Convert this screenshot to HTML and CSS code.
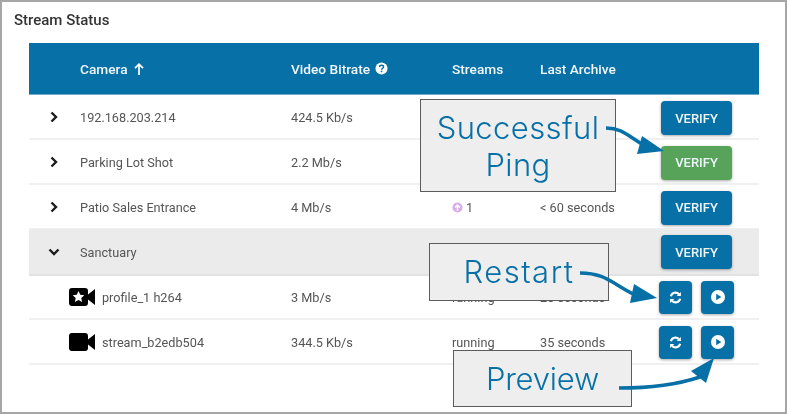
FILE: index.html
```html
<!DOCTYPE html>
<html lang="en">
<head>
<meta charset="utf-8">
<title>Stream Status</title>
<link rel="stylesheet" href="styles.css">
</head>
<body>
<main class="frame">
  <h1 class="title">Stream Status</h1>
  <section class="table">
    <div class="row head">
      <div class="c-exp"></div>
      <div class="c-name">Camera
        <svg class="sort" viewBox="0 0 10 12" width="10" height="12"><path d="M5 12V1.500M1 5.200L5 1.200l4 4" fill="none" stroke="#fff" stroke-width="1.700"/></svg>
      </div>
      <div class="c-rate">Video Bitrate
        <svg class="help" viewBox="0 0 14 14" width="13" height="13"><circle cx="7" cy="7" r="6.500" fill="#fff"/><path d="M4.900 5.400C4.900 4.200 5.800 3.500 7 3.500s2.200.7 2.200 1.800c0 1.600-2.100 1.500-2.100 3" fill="none" stroke="#0770a6" stroke-width="1.500"/><rect x="6.200" y="9.400" width="1.700" height="1.600" fill="#0770a6"/></svg>
      </div>
      <div class="c-streams">Streams</div>
      <div class="c-archive">Last Archive</div>
      <div class="c-act"></div>
    </div>

    <div class="row">
      <div class="c-exp"><svg class="chev" viewBox="0 0 10 12" width="10" height="12"><path d="M2.500 1.500L7 6l-4.500 4.500" fill="none" stroke="#1c1c1c" stroke-width="2.400"/></svg></div>
      <div class="c-name">192.168.203.214</div>
      <div class="c-rate">424.5 Kb/s</div>
      <div class="c-streams"></div>
      <div class="c-archive"></div>
      <div class="c-act"><button class="btn verify">VERIFY</button></div>
    </div>

    <div class="row">
      <div class="c-exp"><svg class="chev" viewBox="0 0 10 12" width="10" height="12"><path d="M2.500 1.500L7 6l-4.500 4.500" fill="none" stroke="#1c1c1c" stroke-width="2.400"/></svg></div>
      <div class="c-name">Parking Lot Shot</div>
      <div class="c-rate">2.2 Mb/s</div>
      <div class="c-streams"></div>
      <div class="c-archive"></div>
      <div class="c-act"><button class="btn verify lift success">VERIFY</button></div>
    </div>

    <div class="row">
      <div class="c-exp"><svg class="chev" viewBox="0 0 10 12" width="10" height="12"><path d="M2.500 1.500L7 6l-4.500 4.500" fill="none" stroke="#1c1c1c" stroke-width="2.400"/></svg></div>
      <div class="c-name">Patio Sales Entrance</div>
      <div class="c-rate">4 Mb/s</div>
      <div class="c-streams"><svg class="up" viewBox="0 0 12 12" width="11" height="11"><circle cx="6" cy="6" r="5.500" fill="#d9ace8"/><path d="M6 9.500V3.500M3.400 6L6 3.300 8.600 6" fill="none" stroke="#fff" stroke-width="1.600"/></svg>1</div>
      <div class="c-archive">&lt; 60 seconds</div>
      <div class="c-act"><button class="btn verify lift">VERIFY</button></div>
    </div>

    <div class="row open">
      <div class="c-exp"><svg class="chev" viewBox="0 0 12 10" width="12" height="10"><path d="M1.500 2.500L6 7l4.500-4.500" fill="none" stroke="#1c1c1c" stroke-width="2.400"/></svg></div>
      <div class="c-name">Sanctuary</div>
      <div class="c-rate"></div>
      <div class="c-streams"></div>
      <div class="c-archive"></div>
      <div class="c-act"><button class="btn verify flat">VERIFY</button></div>
    </div>

    <div class="row first-sub">
      <div class="c-exp"></div>
      <div class="c-name sub">
        <svg class="cam" viewBox="0 0 26 18" width="26" height="18"><path d="M3 0h13a3 3 0 0 1 3 3v3.500l7-5.500v16l-7-5.500V15a3 3 0 0 1-3 3H3a3 3 0 0 1-3-3V3a3 3 0 0 1 3-3z" fill="#000"/><path d="M9.500 3l1.800 3.700 4 .5-3 2.800.8 4-3.600-2-3.600 2 .8-4-3-2.800 4-.5z" fill="#fff"/></svg>
        profile_1 h264</div>
      <div class="c-rate">3 Mb/s</div>
      <div class="c-streams">running</div>
      <div class="c-archive">20 seconds</div>
      <div class="c-act icons">
        <button class="btn icon" aria-label="Restart"><svg viewBox="0 0 14 14" width="13" height="13"><path d="M2 5.600A5 5 0 0 1 10.800 3.600M12 8.400A5 5 0 0 1 3.200 10.400" fill="none" stroke="#fff" stroke-width="2.300"/><path d="M12.800 1v4.500H8.300zM1.200 13V8.500h4.500z" fill="#fff"/></svg></button>
        <button class="btn icon" aria-label="Preview"><svg viewBox="0 0 14 14" width="14" height="14"><circle cx="7" cy="7" r="7" fill="#fff"/><path d="M5.200 3.800L10.300 7l-5.100 3.200z" fill="#0770a6"/></svg></button>
      </div>
    </div>

    <div class="row">
      <div class="c-exp"></div>
      <div class="c-name sub">
        <svg class="cam" viewBox="0 0 26 18" width="26" height="18"><path d="M3 0h13a3 3 0 0 1 3 3v3.500l7-5.500v16l-7-5.500V15a3 3 0 0 1-3 3H3a3 3 0 0 1-3-3V3a3 3 0 0 1 3-3z" fill="#000"/></svg>
        stream_b2edb504</div>
      <div class="c-rate">344.5 Kb/s</div>
      <div class="c-streams">running</div>
      <div class="c-archive">35 seconds</div>
      <div class="c-act icons">
        <button class="btn icon" aria-label="Restart"><svg viewBox="0 0 14 14" width="13" height="13"><path d="M2 5.600A5 5 0 0 1 10.800 3.600M12 8.400A5 5 0 0 1 3.200 10.400" fill="none" stroke="#fff" stroke-width="2.300"/><path d="M12.800 1v4.500H8.300zM1.200 13V8.500h4.500z" fill="#fff"/></svg></button>
        <button class="btn icon" aria-label="Preview"><svg viewBox="0 0 14 14" width="14" height="14"><circle cx="7" cy="7" r="7" fill="#fff"/><path d="M5.200 3.800L10.300 7l-5.100 3.200z" fill="#0770a6"/></svg></button>
      </div>
    </div>
  </section>

  <div class="callout ping">Successful<br>Ping</div>
  <div class="callout restart">Restart</div>
  <div class="callout preview">Preview</div>

  <svg class="arrows" viewBox="0 0 787 414" width="787" height="414">
    <path d="M606 128C622 128 628 136 645 146" fill="none" stroke="#0770a6" stroke-width="3.500"/>
    <path d="M642 136L664 151 637 154z" fill="#0770a6"/>
    <path d="M580 273C606 273 612 284 635 295" fill="none" stroke="#0770a6" stroke-width="3.500"/>
    <path d="M634 284L657 298 630 303z" fill="#0770a6"/>
    <path d="M619 388C650 388 676 385 700 377" fill="none" stroke="#0770a6" stroke-width="3.500"/>
    <path d="M691 371L714 358 706 383z" fill="#0770a6"/>
  </svg>
</main>
</body>
</html>
```
FILE: styles.css
```css
* { box-sizing: border-box; }
html, body { margin: 0; padding: 0; background: #fff; }
body { width: 787px; height: 414px; overflow: hidden; font-family: Roboto, "Liberation Sans", sans-serif; }

.frame {
  position: relative;
  width: 787px;
  height: 414px;
  padding: 10px 27px 0;
  border: 2px solid #a6a6a6;
  background: #fff;
  filter: blur(0.3px);
}

.title {
  margin: 0 0 0 -15px;
  height: 31px;
  font-size: 15px;
  line-height: 16px;
  font-weight: 500;
  color: #333;
}

.table { width: 730px; }

.row {
  display: flex;
  align-items: center;
  height: 45px;
  padding-top: 1px;
  border-bottom: 2px solid #f0f0f0;
  font-size: 12.700px;
  color: #555;
}
.row.head {
  height: 52px;
  padding-top: 0;
  background: #0770a6;
  border-bottom: 1px solid #6fa9cb;
  color: #f2f7fa;
  font-size: 13.700px;
  font-weight: 500;
}
.row.open {
  height: 47px;
  margin-top: -1px;
  padding-top: 1px;
  background: #ebebeb;
  border-bottom-color: #e2e2e2;
}
.row.first-sub { height: 44px; padding-top: 0; }

.c-exp { width: 51px; flex: none; display: flex; justify-content: center; padding-right: 1px; }
.c-name { width: 211px; flex: none; display: flex; align-items: center; gap: 7px; }
.c-name.sub { margin-left: -11px; width: 222px; gap: 7px; }
.c-rate { width: 161px; flex: none; display: flex; align-items: center; gap: 4px; }
.c-streams { width: 88px; flex: none; display: flex; align-items: center; gap: 3px; }
.c-archive { width: 120px; flex: none; }
.c-act { flex: 1; display: flex; justify-content: flex-start; padding-left: 1px; }
.c-act.icons { gap: 9px; margin-left: -2px; }
.sort { margin-left: -1px; }
.help { margin-left: 1px; }

.btn {
  border: 0;
  padding: 0;
  background: #0770a6;
  color: #eef6fa;
  border-radius: 4px;
  box-shadow: 0 1px 3px rgba(0, 0, 0, 0.35);
  font-family: inherit;
  display: flex;
  align-items: center;
  justify-content: center;
}
.verify { width: 71px; height: 34px; margin-top: 2px; font-size: 13px; font-weight: 500; }
.verify.lift { margin-top: 1px; }
.verify.flat { margin-top: 0; }
.success { background: #57a35a; }
.icon { width: 33px; height: 33px; }

.callout {
  position: absolute;
  border: 1px solid #5c5c5c;
  background: #eeeeee;
  color: #0770a6;
  font-family: Inter, "Noto Sans", sans-serif;
  font-weight: 300;
  font-size: 31px;
  line-height: 37px;
  text-align: center;
}
.ping { left: 418px; top: 97px; width: 196px; height: 93px; padding-top: 9px; letter-spacing: 0.400px; }
.restart { left: 427px; top: 241px; width: 180px; height: 58px; padding-top: 9px; letter-spacing: 1.500px; }
.preview { left: 451px; top: 348px; width: 179px; height: 57px; padding-top: 9px; letter-spacing: -0.200px; }

.arrows { position: absolute; left: -2px; top: -2px; pointer-events: none; }
```
